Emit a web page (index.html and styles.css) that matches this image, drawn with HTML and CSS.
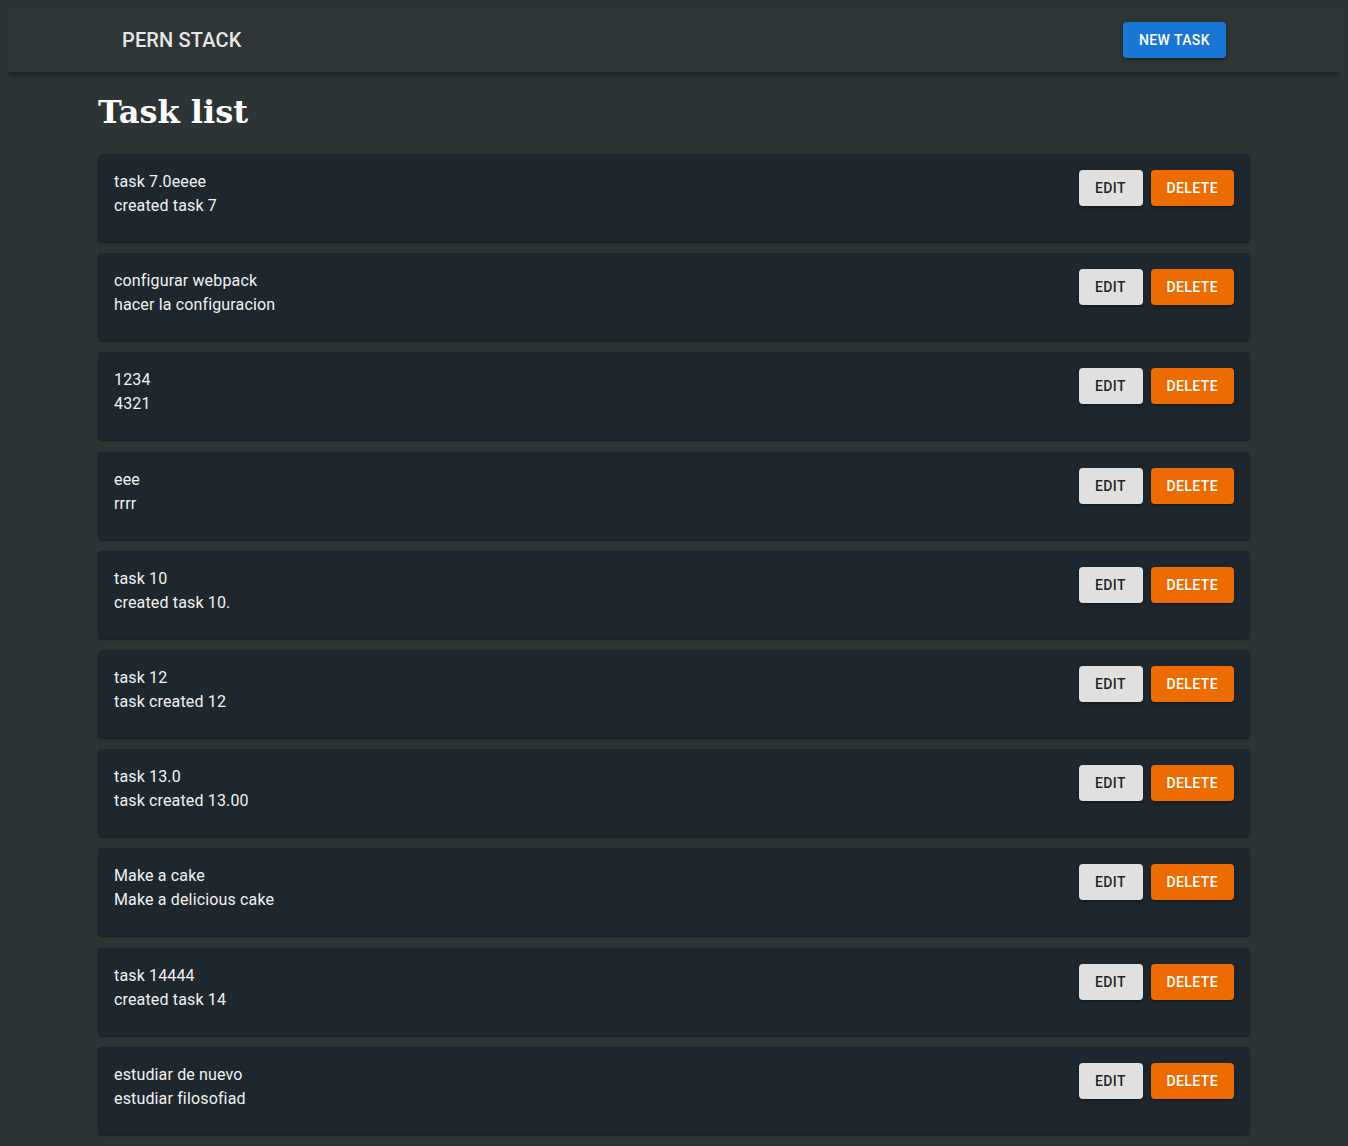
FILE: index.html
```html
<!DOCTYPE html>
<html lang="en">
<head>
  <meta charset="UTF-8">
  <meta name="viewport" content="width=device-width, initial-scale=1.0">
  <title>PERN Stack</title>
  <link rel="stylesheet" href="styles.css">
</head>
<body>
  <header class="appbar">
    <div class="container">
      <div class="toolbar">
        <span class="brand">PERN STACK</span>
        <button class="btn btn-primary">New Task</button>
      </div>
    </div>
  </header>

  <main class="container">
    <h1>Task list</h1>

    <div class="card">
      <div class="card-text">
        <p>task 7.0eeee</p>
        <p>created task 7</p>
      </div>
      <div class="card-actions">
        <button class="btn btn-light">Edit</button>
        <button class="btn btn-warning">Delete</button>
      </div>
    </div>

    <div class="card">
      <div class="card-text">
        <p>configurar webpack</p>
        <p>hacer la configuracion</p>
      </div>
      <div class="card-actions">
        <button class="btn btn-light">Edit</button>
        <button class="btn btn-warning">Delete</button>
      </div>
    </div>

    <div class="card">
      <div class="card-text">
        <p>1234</p>
        <p>4321</p>
      </div>
      <div class="card-actions">
        <button class="btn btn-light">Edit</button>
        <button class="btn btn-warning">Delete</button>
      </div>
    </div>

    <div class="card">
      <div class="card-text">
        <p>eee</p>
        <p>rrrr</p>
      </div>
      <div class="card-actions">
        <button class="btn btn-light">Edit</button>
        <button class="btn btn-warning">Delete</button>
      </div>
    </div>

    <div class="card">
      <div class="card-text">
        <p>task 10</p>
        <p>created task 10.</p>
      </div>
      <div class="card-actions">
        <button class="btn btn-light">Edit</button>
        <button class="btn btn-warning">Delete</button>
      </div>
    </div>

    <div class="card">
      <div class="card-text">
        <p>task 12</p>
        <p>task created 12</p>
      </div>
      <div class="card-actions">
        <button class="btn btn-light">Edit</button>
        <button class="btn btn-warning">Delete</button>
      </div>
    </div>

    <div class="card">
      <div class="card-text">
        <p>task 13.0</p>
        <p>task created 13.00</p>
      </div>
      <div class="card-actions">
        <button class="btn btn-light">Edit</button>
        <button class="btn btn-warning">Delete</button>
      </div>
    </div>

    <div class="card">
      <div class="card-text">
        <p>Make a cake</p>
        <p>Make a delicious cake</p>
      </div>
      <div class="card-actions">
        <button class="btn btn-light">Edit</button>
        <button class="btn btn-warning">Delete</button>
      </div>
    </div>

    <div class="card">
      <div class="card-text">
        <p>task 14444</p>
        <p>created task 14</p>
      </div>
      <div class="card-actions">
        <button class="btn btn-light">Edit</button>
        <button class="btn btn-warning">Delete</button>
      </div>
    </div>

    <div class="card">
      <div class="card-text">
        <p>estudiar de nuevo</p>
        <p>estudiar filosofiad</p>
      </div>
      <div class="card-actions">
        <button class="btn btn-light">Edit</button>
        <button class="btn btn-warning">Delete</button>
      </div>
    </div>
  </main>
</body>
</html>
```

FILE: styles.css
```css
body {
  margin: 8px;
  background-color: #2d3436;
  color: #fff;
  font-family: Roboto, "Liberation Sans", sans-serif;
}
.container {
  max-width: 1200px;
  margin: 0 auto;
  padding: 0 24px;
  box-sizing: border-box;
}
.appbar {
  background-color: #2e3537;
  box-shadow: 0 2px 4px -1px rgba(0, 0, 0, 0.25), 0 4px 5px 0 rgba(0, 0, 0, 0.18), 0 1px 10px 0 rgba(0, 0, 0, 0.16);
}
.toolbar {
  min-height: 64px;
  padding: 0 24px;
  display: flex;
  align-items: center;
  justify-content: space-between;
}
.brand {
  font-size: 20px;
  font-weight: 500;
  color: #e6e6e6;
  letter-spacing: 0.15px;
}
h1 {
  font-family: "DejaVu Serif", serif;
  font-size: 32px;
  font-weight: bold;
  margin: 21px 0 23px;
}
.card {
  display: flex;
  justify-content: space-between;
  align-items: flex-start;
  background-color: #1e272e;
  border-radius: 4px;
  padding: 16px 16px 24px;
  margin-bottom: 11.2px;
  box-shadow: 0 2px 1px -1px rgba(0, 0, 0, 0.2), 0 1px 1px 0 rgba(0, 0, 0, 0.14), 0 1px 3px 0 rgba(0, 0, 0, 0.12);
}
.card-text p {
  margin: 0;
  font-size: 16px;
  line-height: 24px;
  color: #f2f2f2;
  letter-spacing: 0.15px;
}
.card-actions {
  display: flex;
  gap: 8px;
}
.btn {
  font-family: Roboto, "Liberation Sans", sans-serif;
  font-size: 14px;
  font-weight: 500;
  line-height: 24px;
  letter-spacing: 0.4px;
  text-transform: uppercase;
  padding: 6px 16px;
  min-width: 64px;
  border: none;
  border-radius: 4px;
  cursor: pointer;
  box-shadow: 0 3px 1px -2px rgba(0, 0, 0, 0.2), 0 2px 2px 0 rgba(0, 0, 0, 0.14), 0 1px 5px 0 rgba(0, 0, 0, 0.12);
}
.btn-primary {
  background-color: #1976d2;
  color: #fff;
}
.btn-light {
  background-color: #e0e0e0;
  color: rgba(0, 0, 0, 0.87);
}
.btn-warning {
  background-color: #ed6c02;
  color: #fff;
}
```
